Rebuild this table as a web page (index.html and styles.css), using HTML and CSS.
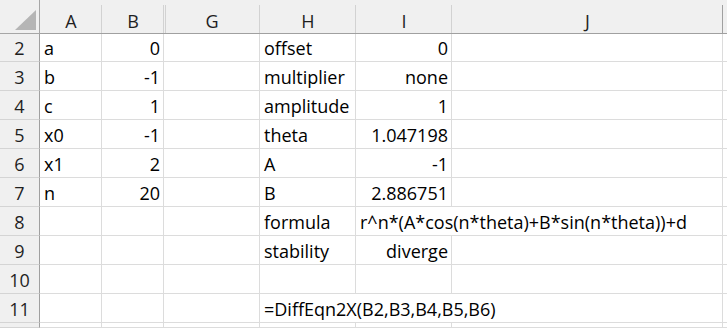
FILE: index.html
```html
<!DOCTYPE html>
<html>
<head>
<meta charset="utf-8">
<link rel="stylesheet" href="styles.css">
</head>
<body>
<div class="sheet">
  <div class="corner"><svg width="39" height="33" viewBox="0 0 39 33"><polygon points="36,10 36,30 15,30" fill="#b5b5b5"/></svg></div>
  <div class="h">A</div>
  <div class="h">B</div>
  <div class="h hid">G</div>
  <div class="h">H</div>
  <div class="h">I</div>
  <div class="h dark">J</div>
  <div class="h end"></div>

  <div class="r">2</div><div class="c">a</div><div class="c n">0</div><div class="c"></div><div class="c">offset</div><div class="c n">0</div><div class="c"></div><div class="c e"></div>
  <div class="r">3</div><div class="c">b</div><div class="c n">-1</div><div class="c"></div><div class="c">multiplier</div><div class="c n">none</div><div class="c"></div><div class="c e"></div>
  <div class="r">4</div><div class="c">c</div><div class="c n">1</div><div class="c"></div><div class="c">amplitude</div><div class="c n">1</div><div class="c"></div><div class="c e"></div>
  <div class="r">5</div><div class="c">x0</div><div class="c n">-1</div><div class="c"></div><div class="c">theta</div><div class="c n">1.047198</div><div class="c"></div><div class="c e"></div>
  <div class="r">6</div><div class="c">x1</div><div class="c n">2</div><div class="c"></div><div class="c">A</div><div class="c n">-1</div><div class="c"></div><div class="c e"></div>
  <div class="r">7</div><div class="c">n</div><div class="c n">20</div><div class="c"></div><div class="c">B</div><div class="c n">2.886751</div><div class="c"></div><div class="c e"></div>
  <div class="r">8</div><div class="c"></div><div class="c"></div><div class="c"></div><div class="c">formula</div><div class="c span2">r^n*(A*cos(n*theta)+B*sin(n*theta))+d</div><div class="c e"></div>
  <div class="r">9</div><div class="c"></div><div class="c"></div><div class="c"></div><div class="c">stability</div><div class="c n">diverge</div><div class="c"></div><div class="c e"></div>
  <div class="r">10</div><div class="c"></div><div class="c"></div><div class="c"></div><div class="c"></div><div class="c"></div><div class="c"></div><div class="c e"></div>
  <div class="r">11</div><div class="c"></div><div class="c"></div><div class="c"></div><div class="c span3">=DiffEqn2X(B2,B3,B4,B5,B6)</div><div class="c e"></div>
  <div class="r"></div><div class="c"></div><div class="c"></div><div class="c"></div><div class="c"></div><div class="c"></div><div class="c"></div><div class="c e"></div>
</div>
</body>
</html>
```

FILE: styles.css
```css
html, body {
  margin: 0;
  padding: 0;
  background: #ffffff;
  overflow: hidden;
}
.sheet {
  width: 727px;
  height: 328px;
  display: grid;
  grid-template-columns: 40px 62px 62px 96px 96px 96px 271px 1fr;
  grid-template-rows: 34px 28px repeat(9, 29px) 1fr;
  font-family: "Open Sans", "Liberation Sans", sans-serif;
  font-size: 18px;
  line-height: 1;
  color: #000;
  overflow: hidden;
}
.sheet > div {
  box-sizing: border-box;
  white-space: nowrap;
  overflow: hidden;
}
.corner {
  background: #f0f0f0;
  border-right: 1px solid #a6a6a6;
  border-bottom: 1px solid #a6a6a6;
}
.corner svg {
  display: block;
}
.h {
  background: linear-gradient(#d2d2d2, #d2d2d2) right 5px / 1px calc(100% - 5px) no-repeat, #f0f0f0;
  border-bottom: 1px solid #a0a0a0;
  display: flex;
  align-items: flex-end;
  justify-content: center;
  padding-bottom: 3px;
  color: #1f1f1f;
}
.h.hid {
  background: linear-gradient(#d2d2d2, #d2d2d2) right 5px / 1px calc(100% - 5px) no-repeat,
              linear-gradient(#d2d2d2, #d2d2d2) 1px 5px / 1px calc(100% - 5px) no-repeat, #f0f0f0;
}
.h.dark {
  background: linear-gradient(#a0a0a0, #a0a0a0) right 5px / 1px calc(100% - 5px) no-repeat, #f0f0f0;
}
.h.end {
  background: #f0f0f0;
}
.r {
  background: #f0f0f0;
  border-right: 1px solid #a0a0a0;
  border-bottom: 1px solid #d4d4d4;
  display: flex;
  align-items: flex-end;
  justify-content: center;
  padding-bottom: 4px;
  color: #1f1f1f;
}
.c {
  border-right: 1px solid #dcdcdc;
  border-bottom: 1px solid #dcdcdc;
  display: flex;
  align-items: flex-end;
  padding: 0 3px 4px 4px;
}
.c.e {
  border-right: none;
}
.n {
  justify-content: flex-end;
}
.span2 {
  grid-column: span 2;
}
.span3 {
  grid-column: span 3;
}
```
